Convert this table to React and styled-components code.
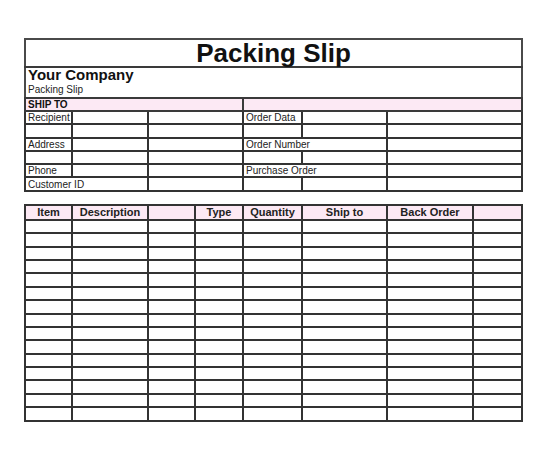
import styled, { createGlobalStyle } from "styled-components"

const GlobalStyle = createGlobalStyle`
  html, body {
    margin: 0;
    background: #ffffff;
  }
  body {
    font-family: "Liberation Sans", Arial, sans-serif;
    color: #1a1a1a;
  }
`

const infoCols = [47, 76, 95, 59, 85, 135]
const itemCols = [47, 76, 47, 48, 59, 85, 86, 49]
const itemHeads = ["Item", "Description", "", "Type", "Quantity", "Ship to", "Back Order", ""]

export default function App() {
  const rows = Array.from({ length: 15 }, (_, i) => i)

  return (
    <Page>
      <GlobalStyle />
      <Sheet>
        <colgroup>
          {infoCols.map((w, i) => <col key={i} style={{ width: w }} />)}
        </colgroup>
        <tbody>
          <tr>
            <Title colSpan={6}>Packing Slip</Title>
          </tr>
          <tr>
            <Company colSpan={6}>
              <strong>Your Company</strong>
              <span>Packing Slip</span>
            </Company>
          </tr>
          <tr>
            <Band colSpan={3} $bold>SHIP TO</Band>
            <Band colSpan={3}></Band>
          </tr>
          <tr>
            <Cell>Recipient</Cell><Cell /><Cell />
            <Cell>Order Data</Cell><Cell /><Cell />
          </tr>
          <tr>
            <Cell /><Cell /><Cell /><Cell /><Cell /><Cell />
          </tr>
          <tr>
            <Cell>Address</Cell><Cell /><Cell />
            <Cell colSpan={2}>Order Number</Cell><Cell />
          </tr>
          <tr>
            <Cell /><Cell /><Cell /><Cell /><Cell /><Cell />
          </tr>
          <tr>
            <Cell>Phone</Cell><Cell /><Cell />
            <Cell colSpan={2}>Purchase Order</Cell><Cell />
          </tr>
          <tr>
            <Cell colSpan={2}>Customer ID</Cell><Cell />
            <Cell /><Cell /><Cell />
          </tr>
        </tbody>
      </Sheet>

      <Items>
        <colgroup>
          {itemCols.map((w, i) => <col key={i} style={{ width: w }} />)}
        </colgroup>
        <thead>
          <tr>
            {itemHeads.map((h, i) => <Head key={i}>{h}</Head>)}
          </tr>
        </thead>
        <tbody>
          {rows.map(r => (
            <tr key={r}>
              {itemCols.map((_, i) => <Line key={i} />)}
            </tr>
          ))}
        </tbody>
      </Items>
    </Page>
  )
}

const Page = styled.div`
  display: flex;
  flex-direction: column;
  gap: 12px;
  padding: 38px 29px 0 24px;
  width: 497px;
`
const Sheet = styled.table`
  width: 497px;
  table-layout: fixed;
  border-collapse: collapse;
  border: 2px solid #4a4a4a;
`
const Items = styled(Sheet)``

const Title = styled.td`
  height: 26px;
  padding: 0;
  text-align: center;
  font-size: 26px;
  font-weight: 700;
  line-height: 26px;
  color: #111;
  border-bottom: 2px solid #3a3a3a;
`
const Company = styled.td`
  height: 29px;
  padding: 0 2px;
  vertical-align: top;
  strong {
    display: block;
    font-size: 15px;
    line-height: 15px;
    margin-top: -1px;
    color: #111;
  }
  span {
    display: block;
    font-size: 10px;
    line-height: 12px;
    margin-top: 2px;
    color: #222;
  }
`
const Band = styled.td`
  height: 11px;
  padding: 0 2px;
  background: #fce9f4;
  border: 2px solid #3a3a3a;
  font-size: 10px;
  line-height: 11px;
  font-weight: ${p => (p.$bold ? 700 : 400)};
  color: #111;
`
const Cell = styled.td`
  height: 11.3px;
  padding: 0 2px;
  border: 2px solid #333;
  font-size: 10px;
  line-height: 11px;
  color: #222;
  white-space: nowrap;
  overflow: hidden;
`
const Head = styled.th`
  height: 13px;
  padding: 0;
  background: #fce9f4;
  border: 2px solid #333;
  font-size: 11px;
  line-height: 12px;
  font-weight: 700;
  color: #222;
`
const Line = styled.td`
  height: 11.4px;
  padding: 0;
  border: 2px solid #333;
`
